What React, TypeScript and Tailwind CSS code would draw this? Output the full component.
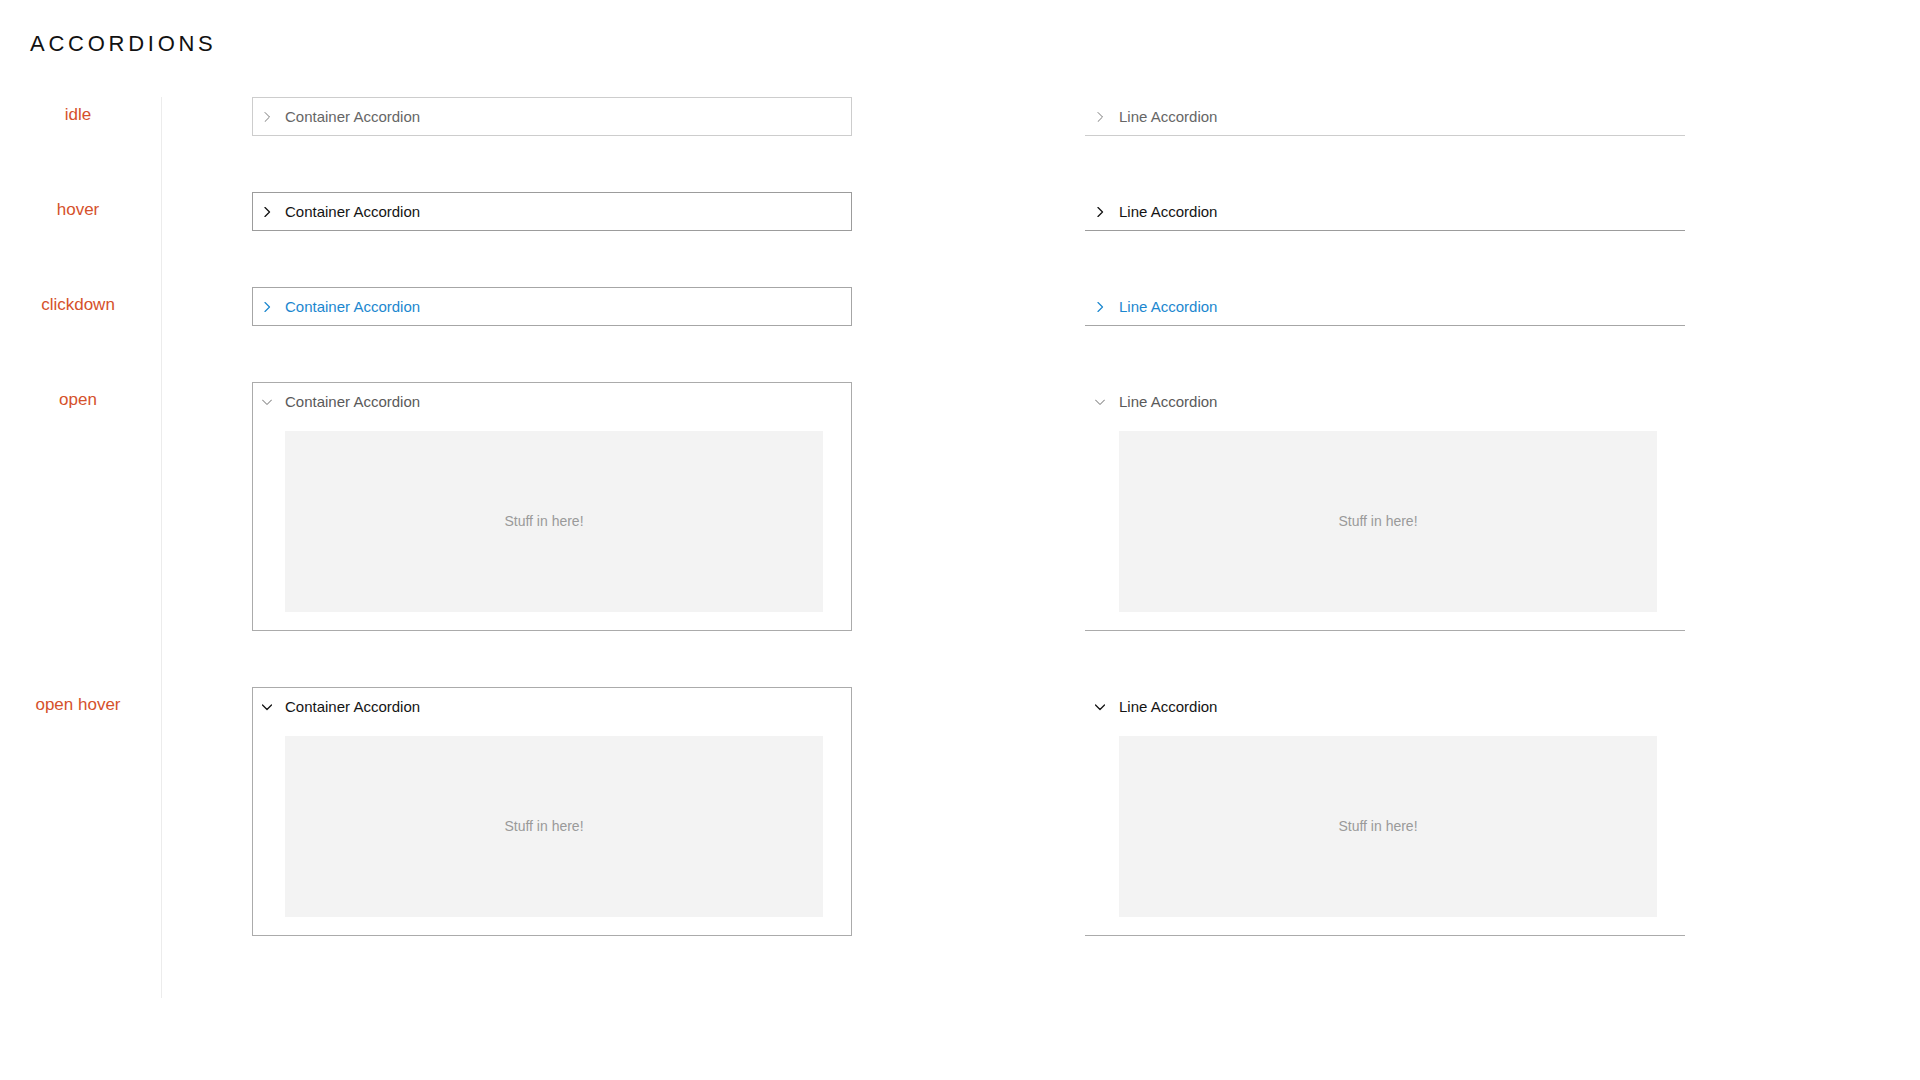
import React from "react";

type State = "idle" | "hover" | "clickdown" | "open" | "openHover";

const styles: Record<State, { border: string; text: string; icon: string; stroke: number }> = {
  idle: { border: "border-[#cdcdcd]", text: "text-[#666666]", icon: "#7a7a7a", stroke: 1 },
  hover: { border: "border-[#9c9c9c]", text: "text-[#141414]", icon: "#141414", stroke: 1.3 },
  clickdown: { border: "border-[#a6a6a6]", text: "text-[#1c87cf]", icon: "#1c87cf", stroke: 1.2 },
  open: { border: "border-[#ababab]", text: "text-[#5a5a5a]", icon: "#6a6a6a", stroke: 1 },
  openHover: { border: "border-[#ababab]", text: "text-[#141414]", icon: "#141414", stroke: 1.3 },
};

const Chevron: React.FC<{ down?: boolean; color: string; stroke: number }> = ({ down, color, stroke }) => (
  <svg width="10" height="10" viewBox="0 0 10 10" fill="none">
    <polyline
      points={down ? "0.5,3 5,7.5 9.5,3" : "3,0.5 7.5,5 3,9.5"}
      stroke={color}
      strokeWidth={stroke}
      strokeLinecap="round"
      strokeLinejoin="round"
    />
  </svg>
);

const Stuff: React.FC<{ left: string }> = ({ left }) => (
  <div className={`${left} mt-[11px] mb-[18px] w-[538px] h-[181px] bg-[#f3f3f3] flex items-center justify-center pr-5`}>
    <span className="text-[14px] text-[#9a9a9a]">Stuff in here!</span>
  </div>
);

const ContainerAccordion: React.FC<{ state: State }> = ({ state }) => {
  const s = styles[state];
  const isOpen = state === "open" || state === "openHover";
  return (
    <div className={`w-[600px] border bg-white ${s.border}`}>
      <div className="h-[37px] flex items-center">
        <div className="w-[32px] pl-[9px] flex items-center">
          <Chevron down={isOpen} color={s.icon} stroke={s.stroke} />
        </div>
        <span className={`text-[15px] leading-5 ${s.text}`}>Container Accordion</span>
      </div>
      {isOpen && <Stuff left="ml-[32px]" />}
    </div>
  );
};

const LineAccordion: React.FC<{ state: State }> = ({ state }) => {
  const s = styles[state];
  const isOpen = state === "open" || state === "openHover";
  return (
    <div className={`w-[600px] border-b ${s.border}`}>
      <div className="h-[38px] flex items-center pt-[1px]">
        <div className="w-[34px] pl-[10px] flex items-center">
          <Chevron down={isOpen} color={s.icon} stroke={s.stroke} />
        </div>
        <span className={`text-[15px] leading-5 ${s.text}`}>Line Accordion</span>
      </div>
      {isOpen && <Stuff left="ml-[34px]" />}
    </div>
  );
};

const rows: { label: string; state: State }[] = [
  { label: "idle", state: "idle" },
  { label: "hover", state: "hover" },
  { label: "clickdown", state: "clickdown" },
  { label: "open", state: "open" },
  { label: "open hover", state: "openHover" },
];

export default function App() {
  return (
    <div
      className="min-h-screen w-full bg-white pt-[30px]"
      style={{ fontFamily: '"Liberation Sans", Arial, sans-serif' }}
    >
      <h1 className="pl-[30px] text-[22px] leading-[28px] tracking-[0.17em] text-[#111111]">ACCORDIONS</h1>

      <div className="mt-[39px] grid grid-cols-[161px_1fr]">
        {rows.map((row, i) => (
          <React.Fragment key={row.label}>
            <div className="pr-[5px]">
              <div className="h-[39px] flex items-center justify-center pb-[4px]">
                <span className="text-[17px] leading-5 text-[#d5512b]">{row.label}</span>
              </div>
            </div>
            <div
              className={`border-l border-[#ececec] pl-[90px] ${
                i === rows.length - 1 ? "pb-[62px]" : "pb-[56px]"
              }`}
            >
              <div className="flex items-start gap-[233px]">
                <ContainerAccordion state={row.state} />
                <LineAccordion state={row.state} />
              </div>
            </div>
          </React.Fragment>
        ))}
      </div>
    </div>
  );
}
